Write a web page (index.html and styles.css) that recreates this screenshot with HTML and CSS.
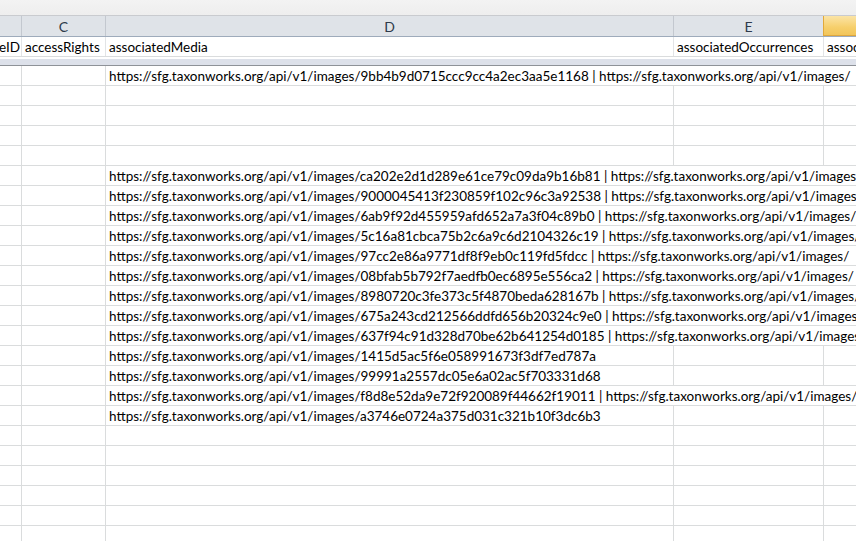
FILE: index.html
```html
<!DOCTYPE html>
<html>
<head>
<meta charset="utf-8">
<link rel="stylesheet" href="styles.css">
</head>
<body>
<div class="sheet">
  <div class="topbar"></div>
  <div class="row colhead">
    <div class="cell cb"></div>
    <div class="cell cc">C</div>
    <div class="cell cd">D</div>
    <div class="cell ce">E</div>
    <div class="cell cf sel"></div>
  </div>
  <div class="row fields">
    <div class="cell cb clip-right">eID</div>
    <div class="cell cc">accessRights</div>
    <div class="cell cd">associatedMedia</div>
    <div class="cell ce">associatedOccurrences</div>
    <div class="cell cf">assoc</div>
  </div>
  <div class="freeze"><div class="freeze-band"></div></div>

  <div class="row"><div class="cell cb"></div><div class="cell cc"></div><div class="cell spill">https://sfg.taxonworks.org/api/v1/images/9bb4b9d0715ccc9cc4a2ec3aa5e1168 | https://sfg.taxonworks.org/api/v1/images/</div></div>
  <div class="row"><div class="cell cb"></div><div class="cell cc"></div><div class="cell cd"></div><div class="cell ce"></div><div class="cell cf"></div></div>
  <div class="row"><div class="cell cb"></div><div class="cell cc"></div><div class="cell cd"></div><div class="cell ce"></div><div class="cell cf"></div></div>
  <div class="row"><div class="cell cb"></div><div class="cell cc"></div><div class="cell cd"></div><div class="cell ce"></div><div class="cell cf"></div></div>
  <div class="row"><div class="cell cb"></div><div class="cell cc"></div><div class="cell cd"></div><div class="cell ce"></div><div class="cell cf"></div></div>
  <div class="row"><div class="cell cb"></div><div class="cell cc"></div><div class="cell spill">https://sfg.taxonworks.org/api/v1/images/ca202e2d1d289e61ce79c09da9b16b81 | https://sfg.taxonworks.org/api/v1/images/</div></div>
  <div class="row"><div class="cell cb"></div><div class="cell cc"></div><div class="cell spill">https://sfg.taxonworks.org/api/v1/images/9000045413f230859f102c96c3a92538 | https://sfg.taxonworks.org/api/v1/images/</div></div>
  <div class="row"><div class="cell cb"></div><div class="cell cc"></div><div class="cell spill">https://sfg.taxonworks.org/api/v1/images/6ab9f92d455959afd652a7a3f04c89b0 | https://sfg.taxonworks.org/api/v1/images/</div></div>
  <div class="row"><div class="cell cb"></div><div class="cell cc"></div><div class="cell spill">https://sfg.taxonworks.org/api/v1/images/5c16a81cbca75b2c6a9c6d2104326c19 | https://sfg.taxonworks.org/api/v1/images/</div></div>
  <div class="row"><div class="cell cb"></div><div class="cell cc"></div><div class="cell spill">https://sfg.taxonworks.org/api/v1/images/97cc2e86a9771df8f9eb0c119fd5fdcc | https://sfg.taxonworks.org/api/v1/images/</div></div>
  <div class="row"><div class="cell cb"></div><div class="cell cc"></div><div class="cell spill">https://sfg.taxonworks.org/api/v1/images/08bfab5b792f7aedfb0ec6895e556ca2 | https://sfg.taxonworks.org/api/v1/images/</div></div>
  <div class="row"><div class="cell cb"></div><div class="cell cc"></div><div class="cell spill">https://sfg.taxonworks.org/api/v1/images/8980720c3fe373c5f4870beda628167b | https://sfg.taxonworks.org/api/v1/images/</div></div>
  <div class="row"><div class="cell cb"></div><div class="cell cc"></div><div class="cell spill">https://sfg.taxonworks.org/api/v1/images/675a243cd212566ddfd656b20324c9e0 | https://sfg.taxonworks.org/api/v1/images/</div></div>
  <div class="row"><div class="cell cb"></div><div class="cell cc"></div><div class="cell spill">https://sfg.taxonworks.org/api/v1/images/637f94c91d328d70be62b641254d0185 | https://sfg.taxonworks.org/api/v1/images/</div></div>
  <div class="row"><div class="cell cb"></div><div class="cell cc"></div><div class="cell cd">https://sfg.taxonworks.org/api/v1/images/1415d5ac5f6e058991673f3df7ed787a</div><div class="cell ce"></div><div class="cell cf"></div></div>
  <div class="row"><div class="cell cb"></div><div class="cell cc"></div><div class="cell cd">https://sfg.taxonworks.org/api/v1/images/99991a2557dc05e6a02ac5f703331d68</div><div class="cell ce"></div><div class="cell cf"></div></div>
  <div class="row"><div class="cell cb"></div><div class="cell cc"></div><div class="cell spill">https://sfg.taxonworks.org/api/v1/images/f8d8e52da9e72f920089f44662f19011 | https://sfg.taxonworks.org/api/v1/images/</div></div>
  <div class="row"><div class="cell cb"></div><div class="cell cc"></div><div class="cell cd">https://sfg.taxonworks.org/api/v1/images/a3746e0724a375d031c321b10f3dc6b3</div><div class="cell ce"></div><div class="cell cf"></div></div>
  <div class="row"><div class="cell cb"></div><div class="cell cc"></div><div class="cell cd"></div><div class="cell ce"></div><div class="cell cf"></div></div>
  <div class="row"><div class="cell cb"></div><div class="cell cc"></div><div class="cell cd"></div><div class="cell ce"></div><div class="cell cf"></div></div>
  <div class="row"><div class="cell cb"></div><div class="cell cc"></div><div class="cell cd"></div><div class="cell ce"></div><div class="cell cf"></div></div>
  <div class="row"><div class="cell cb"></div><div class="cell cc"></div><div class="cell cd"></div><div class="cell ce"></div><div class="cell cf"></div></div>
  <div class="row"><div class="cell cb"></div><div class="cell cc"></div><div class="cell cd"></div><div class="cell ce"></div><div class="cell cf"></div></div>
  <div class="row"><div class="cell cb"></div><div class="cell cc"></div><div class="cell cd"></div><div class="cell ce"></div><div class="cell cf"></div></div>
</div>
</body>
</html>
```

FILE: styles.css
```css
html, body {
  margin: 0;
  padding: 0;
  background: #ffffff;
  overflow: hidden;
}

.sheet {
  width: 856px;
  height: 541px;
  overflow: hidden;
  font-family: Lato, "Liberation Sans", sans-serif;
  font-size: 13.5px;
  color: #000000;
}

.topbar {
  height: 15px;
  background: linear-gradient(#f3f3f3, #eeeeee);
  border-bottom: 1px solid #c9cbcf;
}

.row {
  display: flex;
  height: 19px;
  border-bottom: 1px solid #dadcdd;
  line-height: 18px;
  white-space: nowrap;
}

.cell {
  box-sizing: border-box;
  height: 100%;
  border-right: 1px solid #dadcdd;
  padding: 1px 2px 0 3px;
  overflow: hidden;
  flex: none;
}

.cb { width: 22px; }
.cc { width: 84px; }
.cd { width: 568px; }
.ce { width: 150px; }
.cf { flex: 1; border-right: none; }

.spill {
  flex: 1;
  border-right: none;
}

.clip-right {
  direction: rtl;
  text-align: left;
  padding: 1px 1px 0 0;
}

.colhead {
  height: 20px;
  line-height: 20px;
  background: #dfe3e8;
  border-bottom: 1px solid #9eabbb;
}

.colhead .cell {
  padding: 1px 0 0 0;
  text-align: center;
  color: #2e3a4a;
  font-size: 14px;
  border-right: 1px solid #c3c8cf;
}

.colhead .cf {
  border-right: none;
}

.colhead .sel {
  background: linear-gradient(#fbe4a6, #f6cf6b 60%, #f2c55a);
  border-left: 1px solid #e2a93a;
  margin-left: -1px;
  border-bottom: 1px solid #e0a83e;
}

.fields .cell {
  border-right-color: #e2e4e6;
}

.freeze {
  padding-top: 2px;
  border-bottom: 1px solid #8e9298;
}

.freeze-band {
  height: 6px;
  background: #dde1ea;
}
```
